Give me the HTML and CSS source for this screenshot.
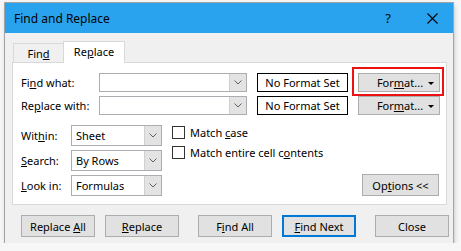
FILE: index.html
```html
<!DOCTYPE html>
<html lang="en">
<head>
  <meta charset="UTF-8">
  <title>Find and Replace</title>
  <link rel="stylesheet" href="styles.css">
</head>
<body>
<div class="window">
  <div class="titlebar">
    <span class="title">Find and Replace</span>
    <span class="help">?</span>
    <svg class="close-x" width="11" height="11" viewBox="0 0 11 11"><path d="M0.5 0.5L10.5 10.5M10.5 0.5L0.5 10.5" stroke="#000" stroke-width="1.1"/></svg>
  </div>

  <div class="tabs">
    <div class="tab">Fin<u>d</u></div>
    <div class="tab active">Re<u>p</u>lace</div>
  </div>

  <div class="panel">
    <div class="find-grid">
      <label>Fi<u>n</u>d what:</label>
      <div class="combo">
        <span class="combo-text"></span>
        <span class="combo-btn"><svg width="8" height="5" viewBox="0 0 8 5"><path d="M0.5 0.5L4 4L7.5 0.5" fill="none" stroke="#606060"/></svg></span>
      </div>
      <div class="no-format">No Format Set</div>
      <div class="highlight">
        <button class="btn format">For<u>m</u>at...<span class="caret"></span></button>
      </div>

      <label>Re<u>p</u>lace with:</label>
      <div class="combo">
        <span class="combo-text"></span>
        <span class="combo-btn"><svg width="8" height="5" viewBox="0 0 8 5"><path d="M0.5 0.5L4 4L7.5 0.5" fill="none" stroke="#606060"/></svg></span>
      </div>
      <div class="no-format">No Format Set</div>
      <div>
        <button class="btn format">For<u>m</u>at...<span class="caret"></span></button>
      </div>
    </div>

    <div class="options">
      <div class="search-grid">
        <label>Wit<u>h</u>in:</label>
        <div class="combo">
          <span class="combo-text">Sheet</span>
          <span class="combo-btn"><svg width="8" height="5" viewBox="0 0 8 5"><path d="M0.5 0.5L4 4L7.5 0.5" fill="none" stroke="#606060"/></svg></span>
        </div>
        <label><u>S</u>earch:</label>
        <div class="combo">
          <span class="combo-text">By Rows</span>
          <span class="combo-btn"><svg width="8" height="5" viewBox="0 0 8 5"><path d="M0.5 0.5L4 4L7.5 0.5" fill="none" stroke="#606060"/></svg></span>
        </div>
        <label><u>L</u>ook in:</label>
        <div class="combo">
          <span class="combo-text">Formulas</span>
          <span class="combo-btn"><svg width="8" height="5" viewBox="0 0 8 5"><path d="M0.5 0.5L4 4L7.5 0.5" fill="none" stroke="#606060"/></svg></span>
        </div>
      </div>

      <div class="checks">
        <div class="check"><span class="box"></span><span>Match <u>c</u>ase</span></div>
        <div class="check"><span class="box"></span><span>Match entire cell c<u>o</u>ntents</span></div>
      </div>

      <button class="btn options-btn">Op<u>t</u>ions &lt;&lt;</button>
    </div>
  </div>

  <div class="actions">
    <button class="btn">Replace <u>A</u>ll</button>
    <button class="btn"><u>R</u>eplace</button>
    <button class="btn spaced">F<u>i</u>nd All</button>
    <button class="btn default"><u>F</u>ind Next</button>
    <button class="btn spaced">Close</button>
  </div>
</div>
</body>
</html>
```

FILE: styles.css
```css
body {
  margin: 0;
  padding: 3px 0 0 5px;
  background-color: #f7f7f7;
  font-family: "Segoe UI", "Noto Sans", sans-serif;
  font-size: 11px;
  color: #000;
}

u {
  text-underline-offset: 1px;
}

label {
  white-space: nowrap;
}

.window {
  width: 448px;
  height: 240px;
  background-color: #f0f0f0;
  box-shadow: 0 0 0 1px #a4a4a4, 1px 2px 5px rgba(0, 0, 0, 0.25);
  box-sizing: border-box;
}

.titlebar {
  height: 30px;
  background-color: #2aa3ee;
  display: flex;
  align-items: center;
  padding-left: 9px;
}

.title {
  font-size: 12px;
  flex: 1;
}

.help {
  font-size: 13px;
  margin-right: 36px;
}

.close-x {
  margin-right: 15px;
}

.tabs {
  display: flex;
  align-items: flex-end;
  height: 21px;
  margin-top: 8px;
  padding-left: 8px;
}

.tab {
  height: 19px;
  box-sizing: border-box;
  border: 1px solid #d9d9d9;
  border-bottom: none;
  background-color: #f0f0f0;
  width: 51px;
  text-align: center;
  line-height: 19px;
}

.tab.active {
  position: relative;
  z-index: 1;
  width: 62px;
  height: 22px;
  margin-left: -1px;
  margin-bottom: -1px;
  background-color: #fff;
  line-height: 19px;
}

.panel {
  margin-left: 7px;
  width: 435px;
  height: 143px;
  box-sizing: border-box;
  border: 1px solid #d9d9d9;
  background-color: #fff;
  padding: 10px 7px 0 8px;
}

.find-grid {
  display: grid;
  grid-template-columns: 68px 148px 91px 82px;
  grid-auto-rows: 19px;
  column-gap: 10px;
  row-gap: 4px;
  align-items: center;
}

.find-grid > div {
  height: 100%;
}

.combo {
  display: flex;
  box-sizing: border-box;
  height: 100%;
  border: 1px solid #abadb3;
  background-color: #fff;
}

.combo-text {
  flex: 1;
  padding-left: 4px;
  display: flex;
  align-items: center;
}

.combo-btn {
  width: 16px;
  background-color: #e3e3e3;
  border-left: 1px solid #d0d0d0;
  display: flex;
  align-items: center;
  justify-content: center;
}

.no-format {
  box-sizing: border-box;
  border: 1px solid #000;
  display: flex;
  align-items: center;
  justify-content: center;
  background-color: #fff;
}

.btn {
  font-family: inherit;
  font-size: inherit;
  color: #000;
  background-color: #e1e1e1;
  border: 1px solid #adadad;
  padding: 0;
  margin: 0;
  box-sizing: border-box;
}

.format {
  width: 100%;
  height: 100%;
  position: relative;
  padding-left: 2px;
}

.caret {
  position: absolute;
  right: 5px;
  top: 8px;
  border-left: 3px solid transparent;
  border-right: 3px solid transparent;
  border-top: 3px solid #000;
}

.highlight {
  position: relative;
}

.highlight::after {
  content: "";
  position: absolute;
  top: -6px;
  left: -6px;
  right: -4px;
  bottom: -4px;
  border: 2px solid #ee1111;
  pointer-events: none;
}

.options {
  display: flex;
  margin-top: 10px;
}

.search-grid {
  display: grid;
  grid-template-columns: 50px 91px;
  grid-auto-rows: 21px;
  row-gap: 4px;
  align-items: center;
}

.search-grid .combo {
  height: 21px;
}

.checks {
  flex: 1;
  display: flex;
  flex-direction: column;
  gap: 7px;
  margin-left: 10px;
  padding-top: 1px;
}

.check {
  display: flex;
  align-items: center;
  height: 13px;
}

.box {
  width: 13px;
  height: 13px;
  box-sizing: border-box;
  border: 1px solid #333;
  background-color: #fff;
  margin-right: 5px;
}

.options-btn {
  align-self: flex-end;
  width: 77px;
  height: 22px;
  margin-bottom: 0;
}

.actions {
  display: flex;
  gap: 10px;
  margin-top: 10px;
  padding-left: 16px;
}

.actions .btn {
  width: 74px;
  height: 22px;
}

.actions .spaced {
  margin-left: 9px;
}

.actions .default {
  border: 2px solid #0078d7;
}
```
